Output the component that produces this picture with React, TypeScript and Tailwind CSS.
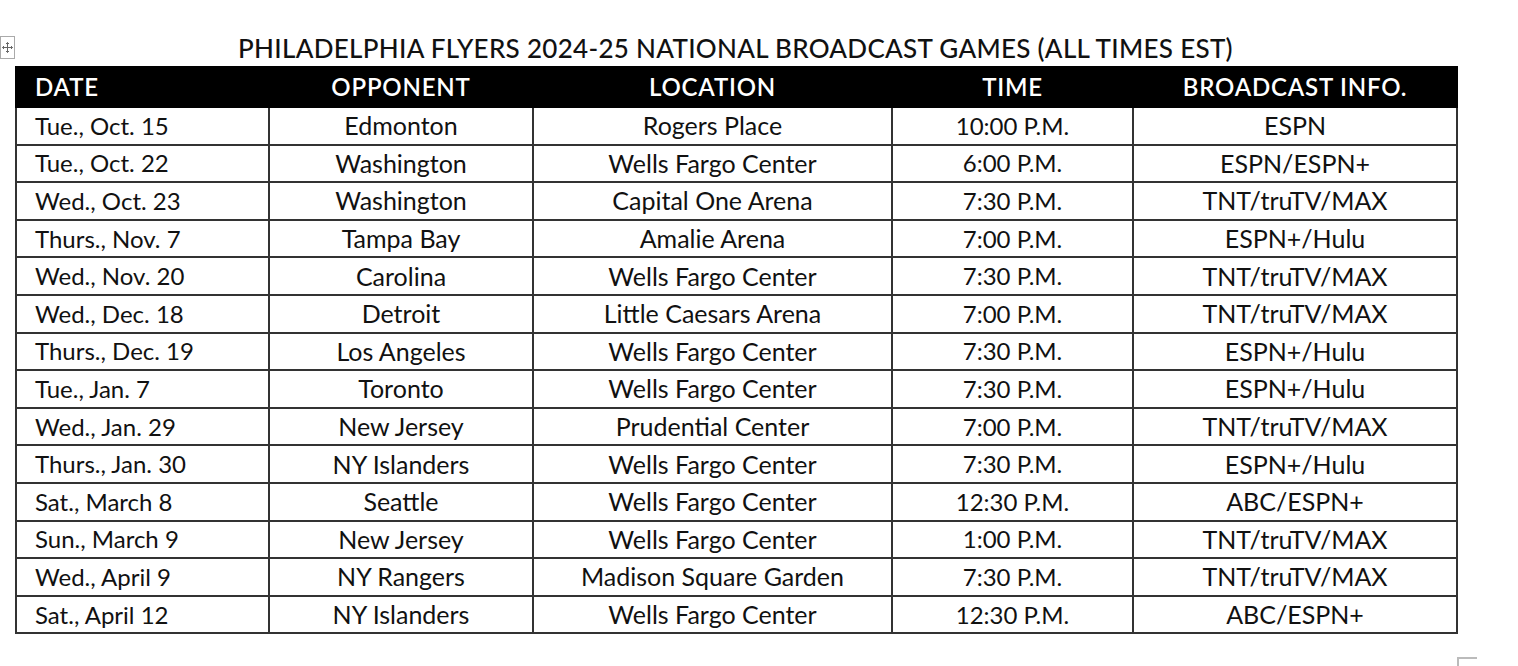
import React from 'react';

interface Game {
  date: string;
  opponent: string;
  location: string;
  time: string;
  broadcast: string;
}

const GAMES: Game[] = [
  { date: 'Tue., Oct. 15', opponent: 'Edmonton', location: 'Rogers Place', time: '10:00 P.M.', broadcast: 'ESPN' },
  { date: 'Tue., Oct. 22', opponent: 'Washington', location: 'Wells Fargo Center', time: '6:00 P.M.', broadcast: 'ESPN/ESPN+' },
  { date: 'Wed., Oct. 23', opponent: 'Washington', location: 'Capital One Arena', time: '7:30 P.M.', broadcast: 'TNT/truTV/MAX' },
  { date: 'Thurs., Nov. 7', opponent: 'Tampa Bay', location: 'Amalie Arena', time: '7:00 P.M.', broadcast: 'ESPN+/Hulu' },
  { date: 'Wed., Nov. 20', opponent: 'Carolina', location: 'Wells Fargo Center', time: '7:30 P.M.', broadcast: 'TNT/truTV/MAX' },
  { date: 'Wed., Dec. 18', opponent: 'Detroit', location: 'Little Caesars Arena', time: '7:00 P.M.', broadcast: 'TNT/truTV/MAX' },
  { date: 'Thurs., Dec. 19', opponent: 'Los Angeles', location: 'Wells Fargo Center', time: '7:30 P.M.', broadcast: 'ESPN+/Hulu' },
  { date: 'Tue., Jan. 7', opponent: 'Toronto', location: 'Wells Fargo Center', time: '7:30 P.M.', broadcast: 'ESPN+/Hulu' },
  { date: 'Wed., Jan. 29', opponent: 'New Jersey', location: 'Prudential Center', time: '7:00 P.M.', broadcast: 'TNT/truTV/MAX' },
  { date: 'Thurs., Jan. 30', opponent: 'NY Islanders', location: 'Wells Fargo Center', time: '7:30 P.M.', broadcast: 'ESPN+/Hulu' },
  { date: 'Sat., March 8', opponent: 'Seattle', location: 'Wells Fargo Center', time: '12:30 P.M.', broadcast: 'ABC/ESPN+' },
  { date: 'Sun., March 9', opponent: 'New Jersey', location: 'Wells Fargo Center', time: '1:00 P.M.', broadcast: 'TNT/truTV/MAX' },
  { date: 'Wed., April 9', opponent: 'NY Rangers', location: 'Madison Square Garden', time: '7:30 P.M.', broadcast: 'TNT/truTV/MAX' },
  { date: 'Sat., April 12', opponent: 'NY Islanders', location: 'Wells Fargo Center', time: '12:30 P.M.', broadcast: 'ABC/ESPN+' },
];

// Word-style table cells: 2px dark rules, fixed row height
const cell = 'border-2 border-[#333] h-[37.6px] p-0 leading-none';

export default function App() {
  return (
    <div className="w-[1518px] h-[666px] bg-white text-[#111] overflow-hidden relative" style={{ fontFamily: 'Lato, "Open Sans", sans-serif' }}>
      {/* table move handle */}
      <div className="absolute left-0 top-[36px] w-[15px] h-[23px] border border-[#aaa] bg-white flex items-center justify-center">
        <svg width="11" height="11" viewBox="0 0 11 11" fill="none" stroke="#666" strokeWidth="1">
          <path d="M5.5 0.5v10M0.5 5.5h10M4 2l1.5-1.5L7 2M4 9l1.5 1.5L7 9M2 4L0.5 5.5 2 7M9 4l1.5 1.5L9 7" />
        </svg>
      </div>

      <div className="pl-[15px] pt-[31px]">
        <div className="w-[1441px] text-center text-[26px] font-medium leading-[35px] tracking-[0.3px]">
          PHILADELPHIA FLYERS 2024-25 NATIONAL BROADCAST GAMES (ALL TIMES EST)
        </div>
        <table className="w-[1441px] table-fixed border-collapse text-[25px]">
          <colgroup>
            <col className="w-[253px]" />
            <col className="w-[264px]" />
            <col className="w-[359px]" />
            <col className="w-[241px]" />
            <col className="w-[324px]" />
          </colgroup>
          <thead>
            <tr className="bg-black text-white text-[24px] tracking-[0.8px]">
              <th className={`${cell} border-black text-left pl-[18px] h-[40px] font-semibold`}>DATE</th>
              <th className={`${cell} border-black h-[40px] font-semibold`}>OPPONENT</th>
              <th className={`${cell} border-black h-[40px] font-semibold`}>LOCATION</th>
              <th className={`${cell} border-black h-[40px] font-semibold`}>TIME</th>
              <th className={`${cell} border-black h-[40px] font-semibold`}>BROADCAST INFO.</th>
            </tr>
          </thead>
          <tbody>
            {GAMES.map(g => (
              <tr key={g.date}>
                <td className={`${cell} text-left pl-[18px] text-[24px]`}>{g.date}</td>
                <td className={`${cell} text-center`}>{g.opponent}</td>
                <td className={`${cell} text-center`}>{g.location}</td>
                <td className={`${cell} text-center text-[24px]`}>{g.time}</td>
                <td className={`${cell} text-center`}>{g.broadcast}</td>
              </tr>
            ))}
          </tbody>
        </table>
      </div>

      {/* page corner mark */}
      <div className="absolute left-[1457px] top-[657px] w-[20px] h-[12px] border-l-2 border-t-2 border-[#bbb]" />
    </div>
  );
}
